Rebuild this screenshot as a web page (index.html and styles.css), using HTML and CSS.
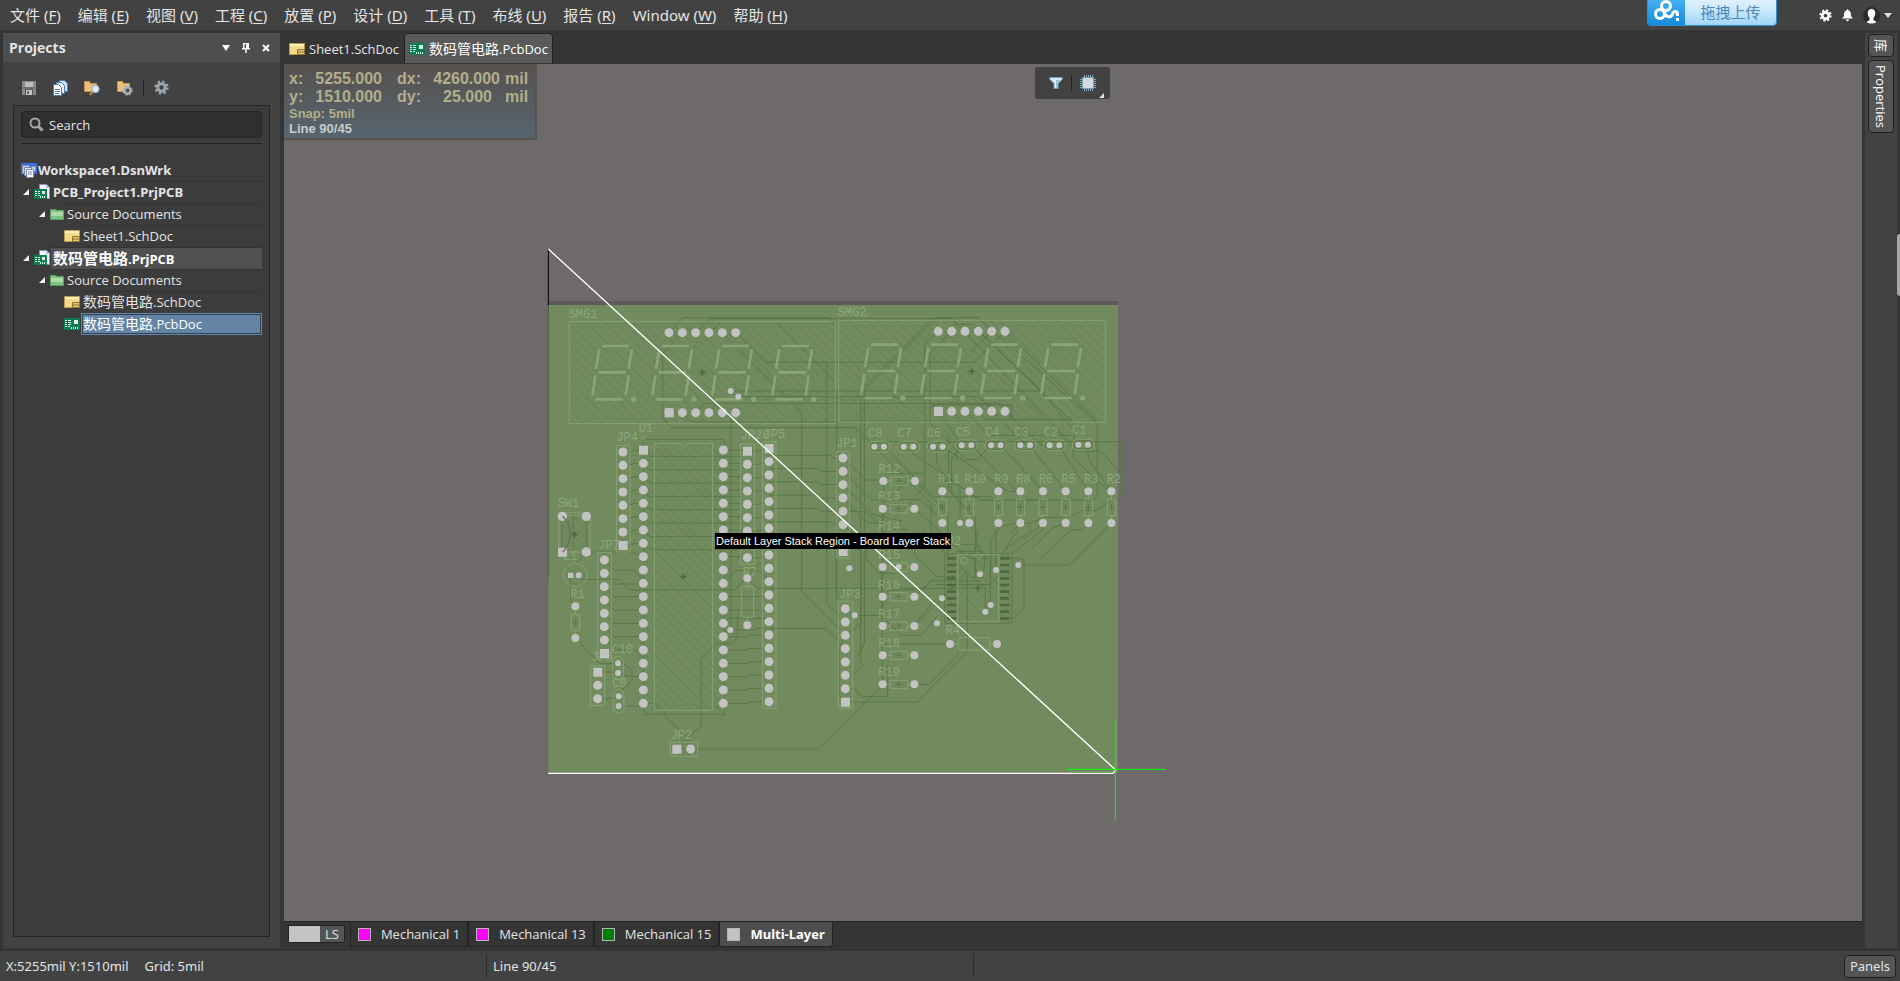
FILE: index.html
```html
<!DOCTYPE html>
<html lang="zh-CN">
  <head>
    <meta charset="UTF-8" />
    <meta name="viewport" content="width=device-width, initial-scale=1.0" />
    <title>数码管电路.PcbDoc</title>
    <link rel="stylesheet" href="styles.css">
  </head>
  <body>
    <!-- shared icons -->
    <svg class="defs" width="0" height="0">
      <symbol id="i-sch" viewBox="0 0 16 14">
        <path fill="#f3d98a" stroke="#b89a4c" d="M.5 1.500h15v11h-15z" />
        <path fill="#fbeebc" d="M1 2h14v2H1z" />
        <path fill="#e7c66c" stroke="#8a7236" d="M8.500 7.500h7v5h-7zM9 10h6" />
      </symbol>
      <symbol id="i-pcb" viewBox="0 0 16 14">
        <path fill="#0b7d52" d="M0 1h16v12H0z" />
        <path stroke="#d8f2e4" d="M1 3.500h2M4 3.500h3M1 5.500h2M4 5.500h3M1 7.500h2M4 7.500h3M1 9.500h2M4 9.500h2M7.500 10v2M9.500 10v2M11.500 10v2M13.500 10v2" />
        <path fill="#e6efea" d="M10 3h4v4h-4z" />
      </symbol>
      <symbol id="i-prj" viewBox="0 0 16 16">
        <path fill="#f2f3fb" stroke="#8b90b5" d="M5.500.5h7l3 3v11h-10z" />
        <path fill="#b9bfe0" d="M12 0v4h4z" />
        <path fill="#0b7d52" d="M0 5h13v10H0z" />
        <path stroke="#d8f2e4" d="M1 7.500h2M4 7.500h2M1 9.500h2M4 9.500h2M1 11.500h2M4 11.500h2M6.500 12v2M8.500 12v2M10.500 12v2" />
        <path fill="#e6efea" d="M8 7h3v3H8z" />
      </symbol>
      <symbol id="i-wrk" viewBox="0 0 16 16">
        <path fill="#3d6fd6" d="M0 1h16v11H0z" />
        <path fill="#c9d6ee" stroke="#7688ac" d="M1.500 3.500h7v8h-7zM10.500 4.500h4v5h-4z" />
        <path fill="#e4eaf5" stroke="#7688ac" d="M3.500 5.500h7v8h-7z" />
        <path fill="#f7f9fd" stroke="#7688ac" d="M5.500 7.500h7v8h-7zM7 10h4M7 12h4" />
      </symbol>
      <symbol id="i-dir" viewBox="0 0 14 12">
        <path fill="#7fc482" stroke="#5f9e62" d="M.5 1.500h5l1.500 1h6.500v9H.5z" />
        <path fill="#a9dba6" d="M1 4h12v4H1z" />
      </symbol>
      <symbol id="i-gear" viewBox="0 0 16 16">
        <circle cx="8" cy="8" r="6.300" fill="none" stroke="currentColor" stroke-width="2.600" stroke-dasharray="2.500 2.450" />
        <circle cx="8" cy="8" r="4" fill="none" stroke="currentColor" stroke-width="3.400" />
      </symbol>
      <symbol id="i-arrow" viewBox="0 0 6 6">
        <path fill="#f2f2f2" d="M6 0v6H0z" />
      </symbol>
    </svg>

    <header class="menubar">
      <nav class="menu">
        <button type="button">文件 (<u>F</u>)</button>
        <button type="button">编辑 (<u>E</u>)</button>
        <button type="button">视图 (<u>V</u>)</button>
        <button type="button">工程 (<u>C</u>)</button>
        <button type="button">放置 (<u>P</u>)</button>
        <button type="button">设计 (<u>D</u>)</button>
        <button type="button">工具 (<u>T</u>)</button>
        <button type="button">布线 (<u>U</u>)</button>
        <button type="button">报告 (<u>R</u>)</button>
        <button type="button">Window (<u>W</u>)</button>
        <button type="button">帮助 (<u>H</u>)</button>
      </nav>
      <button type="button" class="upload">
        <span class="upload-logo">
          <svg width="28" height="24" viewBox="0 0 28 24" fill="none" stroke="#fff" stroke-width="3">
            <circle cx="7" cy="14" r="4.500" />
            <circle cx="13" cy="6" r="4.500" />
            <path d="M10.500 11c2 6 7 8 9 3 1-3 5-4 5 1v1" />
            <path d="M24.500 18v3" />
          </svg>
        </span>
        <span class="upload-text">拖拽上传</span>
      </button>
      <div class="account">
        <button type="button" aria-label="Settings"><svg width="13" height="13"><use href="#i-gear" /></svg></button>
        <button type="button" aria-label="Notifications">
          <svg width="11" height="13" viewBox="0 0 11 13"><path fill="#fff" d="M5.500 0l1 1.500C9 2.200 9 5 9 7l2 2.500H0L2 7c0-2 0-4.800 2.500-5.500zM3.500 10.500h4l-2 2z" /></svg>
        </button>
        <button type="button" class="user" aria-label="User">
          <svg width="17" height="17" viewBox="0 0 17 17"><circle cx="8.500" cy="8.500" r="8.500" fill="#2c2c2c" /><path fill="#fff" d="M8.500 2c2.600 0 3.800 1.800 3.800 4.300S11 10 10.500 11v2l3 2c-2.500 2-7.500 2-10 0l3-2v-2C6 10 4.700 8.800 4.700 6.300S5.900 2 8.500 2z" /></svg>
          <svg width="8" height="5" viewBox="0 0 8 5"><path fill="#ddd" d="M0 0h8L4 5z" /></svg>
        </button>
      </div>
    </header>

    <main class="workspace">
      <aside class="panel">
        <div class="panel-head">
          <h2>Projects</h2>
          <button type="button" aria-label="Menu"><svg width="8" height="6" viewBox="0 0 8 6"><path fill="#fff" d="M0 0h8L4 6z" /></svg></button>
          <button type="button" aria-label="Pin"><svg width="8" height="10" viewBox="0 0 8 10"><path fill="#fff" d="M1 0h6v5h1v1.500H4.700V10H3.300V6.500H0V5h1zM2.500 1v4h1.500V1z" /></svg></button>
          <button type="button" aria-label="Close"><svg width="8" height="8" viewBox="0 0 8 8"><path stroke="#fff" stroke-width="2" d="M1 1l6 6M7 1L1 7" /></svg></button>
        </div>

        <div class="panel-tools">
          <div class="tool-group">
            <button type="button" aria-label="Save">
              <svg width="16" height="16" viewBox="0 0 16 16"><path fill="#8b8b8b" d="M1 1h14v14H1z" /><path fill="#bdbdbd" d="M4 2h8v5H4z" /><path fill="#555" d="M4 9h8v6H4zM2 7.500h12v1H2z" /><path fill="#c8c8c8" d="M5 10h6v5H5z" /><path fill="#666" d="M6 11h2v3H6z" /></svg>
            </button>
            <button type="button" aria-label="Copy">
              <svg width="16" height="16" viewBox="0 0 16 16" stroke="#4f7db5"><path fill="#cfe0f4" d="M7.500.5h5l3 3v8h-8z" /><path fill="#e2edf9" d="M4.500 2.500h5l3 3v8h-8z" /><path fill="#fff" d="M1.500 4.500h5l3 3v8h-8zM3 9.500h5M3 11.500h5M3 13.500h4" /></svg>
            </button>
            <button type="button" aria-label="Find in project">
              <svg width="18" height="16" viewBox="0 0 18 16"><path fill="#e8bf7c" stroke="#c4954f" d="M1.500 1.500h5l1 2h6v8h-12z" /><path stroke="#c98d39" stroke-width="2" d="M10 11l-3 4" /><circle cx="12.500" cy="9" r="3.700" fill="#dcebf5" stroke="#90abc0" /></svg>
            </button>
            <button type="button" aria-label="Project options">
              <svg width="17" height="16" viewBox="0 0 17 16"><path fill="#e8bf7c" stroke="#c4954f" d="M1.500 1.500h5l1 2h6v8h-12z" /><circle cx="11.500" cy="10.500" r="3.200" fill="#555" stroke="#a9b4bc" stroke-width="2.400" /><circle cx="11.500" cy="10.500" r="4.800" fill="none" stroke="#a9b4bc" stroke-dasharray="2 1.770" /></svg>
            </button>
          </div>
          <span class="sep"></span>
          <button type="button" aria-label="Panel settings" class="steel"><svg width="15" height="15"><use href="#i-gear" /></svg></button>
        </div>

        <div class="panel-body">
          <label class="search">
            <svg width="15" height="15" viewBox="0 0 15 15" fill="none" stroke="#a8a8a8"><circle cx="6" cy="6" r="4.500" stroke-width="2" /><path stroke-width="3" d="M9.500 9.500l4 4" /></svg>
            <input type="text" placeholder="Search" aria-label="Search">
          </label>
          <ul class="tree">
            <li class="lv0"><svg width="16" height="16"><use href="#i-wrk" /></svg><a href="#" class="bold">Workspace1.DsnWrk</a></li>
            <li class="lv1"><svg width="6" height="6"><use href="#i-arrow" /></svg><svg width="16" height="16"><use href="#i-prj" /></svg><a href="#" class="bold">PCB_Project1.PrjPCB</a></li>
            <li class="lv2"><svg width="6" height="6"><use href="#i-arrow" /></svg><svg width="14" height="12"><use href="#i-dir" /></svg><a href="#">Source Documents</a></li>
            <li class="lv3"><svg width="16" height="14"><use href="#i-sch" /></svg><a href="#">Sheet1.SchDoc</a></li>
            <li class="lv1"><svg width="6" height="6"><use href="#i-arrow" /></svg><svg width="16" height="16"><use href="#i-prj" /></svg><a href="#" class="bold current"><span class="zh">数码管电路</span>.PrjPCB</a></li>
            <li class="lv2"><svg width="6" height="6"><use href="#i-arrow" /></svg><svg width="14" height="12"><use href="#i-dir" /></svg><a href="#">Source Documents</a></li>
            <li class="lv3"><svg width="16" height="14"><use href="#i-sch" /></svg><a href="#"><span class="zh">数码管电路</span>.SchDoc</a></li>
            <li class="lv3"><svg width="16" height="14"><use href="#i-pcb" /></svg><a href="#" class="selected"><span class="zh">数码管电路</span>.PcbDoc</a></li>
          </ul>
        </div>
      </aside>

      <section class="editor">
        <div class="doc-tabs">
          <button type="button"><svg width="16" height="14"><use href="#i-sch" /></svg>Sheet1.SchDoc</button>
          <button type="button" class="active"><svg width="16" height="14"><use href="#i-pcb" /></svg><span><span class="zh">数码管电路</span>.PcbDoc</span></button>
        </div>

        <div class="canvas">
          <svg class="board" width="640" height="590" viewBox="-12 -150 1920 1770">
            <defs>
              <pattern id="hatch" width="20" height="20" patternUnits="userSpaceOnUse" patternTransform="rotate(45)">
                <path d="M0 10h20" stroke="#67825a" stroke-width="3" />
              </pattern>
              <g id="digit" class="segment">
                <path d="M30 6h81M22 16l-10 58M120 16l-10 58M19 85h83M10 94L1 154M110 94l-9 60M10 166h82" />
                <circle cx="125" cy="166" r="8" />
              </g>
              <g id="six" class="pads"><path d="M0 0h201" /></g>
              <g id="cap">
                <rect class="silk" x="-18" y="-16" width="65" height="32" rx="16" />
                <rect class="trace" x="-13" y="-12" width="55" height="24" rx="12" />
                <circle class="pad" r="9" /><circle class="pad" cx="29" r="9" />
              </g>
              <g id="resv">
                <path class="trace" d="M0 38v20M-9 48H9" />
                <path class="silk" d="M-12 24h25v49h-25zM0 14v10M0 73v10" />
                <circle class="pad" r="12" /><circle class="pad" cy="95" r="12" />
              </g>
              <g id="resh">
                <path class="trace" d="M48-10v20M38 0h20" />
                <path class="silk" d="M23-12h51v25H23zM14 0h9M74 0h9" />
                <circle class="pad" r="12" /><circle class="pad" cx="95" r="12" />
              </g>
            </defs>

            <path fill="#5c5a5a" d="M26 33h1708v14H26z" />
            <path fill="#728b5e" d="M26 45h1708v1403H26z" />

            <!-- component bodies -->
            <g fill="url(#hatch)">
              <path d="M88 94h798v307H88zM307 448h247v825H307zM57 669h93v117H57zM391 1357h82v42h-82zM1214 791h202v209h-202zM896 91h800v306H896z" />
              <circle cx="106" cy="855" r="35" />
            </g>

            <!-- copper -->
            <g class="trace">
              <path d="M387 128L430 83H865l20 20M467 128l43-42h725l40 38M427 128l-59 62v198l26 25h552l57 57M507 128l34-30M587 128l90 89h626l92-93M547 128l238 237v540l115 115" />
              <path d="M572 303h931M595 320h720l60 58M495 340h885l40 40M467 368l28-28M427 368l28 28h1140M507 368l28-34M572 375v645M860 220v720l40 40M890 300v630" />
              <path d="M712 98l170 172M1195 124l-41 41v425l-30 34-60 60M1235 124l-65 66v210l60 60M962 330v790M973 300v760l-20 40M973 300l217-217h125l357 317v220l-10 10h-345" />
              <path d="M1180 83L960 303M1275 124l100 110 220 230M1315 124l300 290M1395 124l275 270M1355 124l-60 60M1235 103h60l220 210M1503 303l100 120v60h80l62 70" />
              <path d="M1195 364l-20-20h240v36l-20 16M1195 370l55 70v70M1235 364l22 22M1275 364l70 72h250M1315 364l22 24h258M1355 364l110 105M1395 364l120 110" />
              <path d="M1003 470l170 170v90M1032 470l150 150h170M1091 470l230 160h340M1208 470l195 134h38M1265 466l-30 40v100l40 52M1294 466l138 138M1353 466l-44 43h-32l-42-43M1382 466l128 138M1470 466l107 138M1557 466l88 138M1600 484v20l108 100M1644 464v40l68 100" />
              <path d="M1021 455h80M1121 455h620v165l-10 8M1190 470v50l40 60M1226 440v160l80 84v180M1154 550h-120" />
              <path d="M909 504l70 66h50M909 544l85 85h150l50 50M909 584l90 90 90 20M909 624l75 75h46M909 664h66l60 55h70M909 704l70 60v50" />
              <path d="M1031 573l-2 170M1124 573l100 95v130l70 65h40M1124 656l160 148h60M1028 656v300M1100 573l-90 90" />
              <path d="M249 486h20l14-6h27M249 526h20l14-6h27M249 566h20l14-6h27M249 606h20l14-6h27M249 646h20l14-6h27M249 686h20l14-6h27M249 726h20l14-6h27M249 766h20l14-6h27" />
              <path d="M310 480l20 19h272M310 520l20 20h272M310 560l20 19h272M310 600l20 19h272M310 640l20 19h272M310 680l20 19h272M310 720l20 19h272M310 760l20 19h272" />
              <path d="M550 480h48l24 3h38l10-5h17M550 520h48l24 3h38l10-5h17M550 560h48l24 3h38l10-5h17M550 600h48l24 3h38l10-5h17M550 640h48l24 3h38l10-5h17M550 680h48l24 3h38l10-5h17M550 720h48l24 3h38l10-5h17M550 760h48l24 3h38l10-5h17M550 800h48l24 3h38l10-5h17" />
              <path d="M687 496h185l10 9h27M687 535h150l8 9h64M687 575h145l8 9h69M687 615h140l8 9h74M687 655h145l8 9h69M687 695h190l8 9h24" />
              <path d="M193 810l30 30h57l30 30M193 850l30 32h87M193 890l28 30h89M193 930l28 30h89M193 970l28 30h89M193 1010l28 30h89M193 1050l34 29h56l27 27M139 786h140l31 14" />
              <path d="M550 1080h70l8-5h59M550 1120h70l8-5h59M550 1160h70l8-5h59M550 1200h70l8-5h59M550 1240h70l8-5h59M550 1040h70l8-5h59M550 1000l15-15h122M550 960h137M550 920h137M550 880l38-38h70l29 30" />
              <path d="M139 786l-30 34M116 856l10 12h110l30 32h320l75-80M92 856v80l14 14M106 1044l74 77h54M173 1146h60M233 1148l35 12h42M173 1226h30l33-6M236 1210l40-40v-30l-42-30M236 1248h74" />
              <path d="M310 1240h30l112 115v22M411 1377l72-70v-200l45-46h45l20-20v-70M572 1020h75l8-5h203l37 37M622 865l30 30h650M452 1377h383l193-193" />
              <path d="M1028 1184l-4-364M1028 831h70M1028 920l20-20h100l30-30M917 1237l-20-20V1070l20-30M917 1156h20l36-36M922 1196h20l26 24h75v-95M916 1236h216l150-150V850" />
              <path d="M888 760v150M963 760v240l-46 38M940 760l76 90h50M944 976h80l60 60h60l46-56M1123 1183h44l88-90v-20M1230 1062h-200M1124 1008l100-100 60-70M1190 925l-70 80M1124 920l48-47h150" />
              <path d="M1124 740v56l66 64h55M1150 720l80 84h18M1250 784h80M1190 884h160l30-30M1263 763h50l20 34v38l-14 18M1319 853l-16-20v-25M1307 720v50l-20 30" />
              <path d="M1352 840v-90l20-30M1368 720v120M1384 800l10-20 40-60M1351 945v-130l-40-40V720M1336 965v-70l-22-20M1435 825h153l105-105M1400 985h20l32-32V810l-10-5h-42M1394 780l80-60M1417 790l90-70v-10" />
              <path d="M1300 720l-40-42v-90l-60-20M1376 720v-10l52-10h40l46-18h66l46-20h40l60-38M1441 699l-30 30M1509 699l-60 50M1577 699l-40 16-60 60M1645 699l-15 20h-35l-98 90M1714 699l-21 21" />
            </g>
            <g class="hidden-copper">
              <path d="M310 448h244v825H310zM1214 791h202v209h-202zM100 669v117M66 669v117M140 669v117" />
              <path class="pins" d="M1235 801v190M1394 801v190" />
              <path class="mark" d="M478 247h19M487 238v19M1286 244h19M1295 235v19M421 860h19M430 851v19M1305 894h19M1314 885v19M95 733h18M104 724v18" />
            </g>

            <!-- overlay -->
            <g class="silk">
              <path d="M88 94h798v307H88zM896 91h800v306H896zM229 466h41v320h-41zM343 460h78c2 14 20 14 22 0h75v801H343zM602 462h42v360h-42zM668 455h40v800h-40zM57 669h93v117H57zM173 788h41v317h-41zM152 1127h42v119h-42zM391 1357h82v42h-82zM890 484h38v320h-38zM895 934h43v321h-43zM1253 794h123v201h-123z" />
              <path d="M604 890h37v92h-37zM622 875v15M622 982v15M1255 1043h94v37h-94zM1242 1062h13M1349 1062h13M1305 794c2 14 20 14 22 0M80 676h46" />
              <path d="M218 1119v-5c0-20 32-20 32 0v40c0 20-32 20-32 0zM220 1219v-5c0-20 32-20 32 0v40c0 20-32 20-32 0z" />
              <circle cx="106" cy="855" r="35" />
              <circle cx="310" cy="443" r="5" />
              <circle cx="1271" cy="811" r="10" />
            </g>
            <use href="#digit" x="156" y="162" /><use href="#digit" x="336" y="162" /><use href="#digit" x="516" y="162" /><use href="#digit" x="696" y="162" />
            <use href="#digit" x="963" y="158" /><use href="#digit" x="1143" y="158" /><use href="#digit" x="1323" y="158" /><use href="#digit" x="1503" y="158" />

            <g class="ref">
              <text x="86" y="83">SMG1</text><text x="893" y="79">SMG2</text>
              <text x="296" y="425">U1</text><text x="229" y="453">JP4</text><text x="602" y="447">JP26</text><text x="671" y="444">JP5</text>
              <text x="53" y="651">SW1</text><text x="174" y="776">JP7</text><text x="69" y="809">L1</text><text x="91" y="924">R1</text>
              <text x="215" y="1089">C10</text><text x="217" y="1190">C9</text><text x="154" y="1112">JP6</text><text x="392" y="1347">JP2</text><text x="608" y="857">R7</text>
              <text x="888" y="472">JP1</text><text x="897" y="924">JP3</text><text x="1217" y="1031">R4</text><text x="1220" y="765">U2</text>
              <text x="984" y="441">C8</text><text x="1072" y="441">C7</text><text x="1160" y="441">C6</text><text x="1247" y="437">C5</text><text x="1335" y="437">C4</text><text x="1423" y="437">C3</text><text x="1511" y="437">C2</text><text x="1596" y="433">C1</text>
              <text x="1015" y="550">R12</text><text x="1015" y="631">R13</text><text x="1015" y="719">R14</text><text x="1015" y="806">R15</text><text x="1015" y="896">R16</text><text x="1015" y="983">R17</text><text x="1015" y="1071">R18</text><text x="1015" y="1159">R19</text>
              <text x="1194" y="579">R11</text><text x="1273" y="579">R10</text><text x="1363" y="579">R9</text><text x="1428" y="579">R8</text><text x="1496" y="579">R6</text><text x="1564" y="579">R5</text><text x="1632" y="579">R3</text><text x="1700" y="579">R2</text>
            </g>

            <!-- parts with their own outline -->
            <use href="#cap" x="1003" y="470" /><use href="#cap" x="1091" y="470" /><use href="#cap" x="1179" y="470" /><use href="#cap" x="1265" y="466" />
            <use href="#cap" x="1353" y="466" /><use href="#cap" x="1441" y="466" /><use href="#cap" x="1529" y="466" /><use href="#cap" x="1615" y="464" />
            <use href="#resv" x="1207" y="604" /><use href="#resv" x="1288" y="604" /><use href="#resv" x="1375" y="604" /><use href="#resv" x="1441" y="604" />
            <use href="#resv" x="1509" y="604" /><use href="#resv" x="1577" y="604" /><use href="#resv" x="1645" y="604" /><use href="#resv" x="1714" y="604" />
            <use href="#resv" x="106" y="949" />
            <use href="#resh" x="1030" y="573" /><use href="#resh" x="1028" y="656" /><use href="#resh" x="1028" y="743" /><use href="#resh" x="1028" y="831" />
            <use href="#resh" x="1028" y="920" /><use href="#resh" x="1028" y="1008" /><use href="#resh" x="1028" y="1096" /><use href="#resh" x="1028" y="1183" />

            <!-- pad rows -->
            <use href="#six" x="387" y="128" /><use href="#six" x="387" y="368" /><use href="#six" x="1195" y="124" /><use href="#six" x="1195" y="364" />
            <g class="pads">
              <path d="M249 486v241M310 520v721M550 480v761M622 523v281M687 515v721M193 810v241M173 1186v41M909 504v241M916 956v241M452 1377h1" />
            </g>
            <g class="pad">
              <path d="M374 355h27v27h-27zM1182 351h27v27h-27zM297 467h27v27h-27zM609 470h27v27h-27zM674 462h27v27h-27zM236 753h27v27h-27zM54 773h27v27H54zM180 1077h27v27h-27zM160 1133h27v27h-27zM397 1364h27v27h-27zM896 771h27v27h-27zM903 1223h27v27h-27zM84 848h16v16H84z" />
              <circle cx="67" cy="679" r="14" /><circle cx="139" cy="679" r="14" /><circle cx="139" cy="786" r="14" />
              <circle cx="116" cy="856" r="9" /><circle cx="622" cy="865" r="12" /><circle cx="622" cy="1006" r="12" />
              <circle cx="234" cy="1120" r="9" /><circle cx="234" cy="1149" r="9" /><circle cx="236" cy="1219" r="9" /><circle cx="236" cy="1248" r="9" />
              <circle cx="1230" cy="1062" r="12" /><circle cx="1371" cy="1062" r="12" />
              <!-- vias -->
              <circle cx="572" cy="303" r="9" /><circle cx="595" cy="320" r="9" /><circle cx="571" cy="1020" r="9" />
              <circle cx="928" cy="835" r="9" /><circle cx="944" cy="976" r="9" /><circle cx="1076" cy="831" r="9" /><circle cx="1260" cy="699" r="9" />
              <circle cx="1206" cy="925" r="9" /><circle cx="1191" cy="1000" r="9" /><circle cx="1320" cy="853" r="9" /><circle cx="1368" cy="840" r="9" />
              <circle cx="1435" cy="825" r="9" /><circle cx="1352" cy="945" r="9" /><circle cx="1336" cy="965" r="9" />
            </g>
            <path class="arc" d="M68 679c30 30 30 78 0 107" />

            <!-- board outline and cursor -->
            <path stroke="#000" stroke-width="3" d="M25-123V45" />
            <path stroke="#4f5a45" stroke-width="3" d="M25 45v815" />
            <path fill="none" stroke="#fff" stroke-width="4" d="M24 1450h1695l8-10L25-123" />
            <path stroke="#0f0" stroke-width="3" d="M1578 1438h300M1726 1290v300" />
          </svg>

          <div class="hud">
            <table>
              <tr><td>x:</td><td class="num">5255.000</td><td class="delta">dx:</td><td class="num">4260.000</td><td class="unit">mil</td></tr>
              <tr><td>y:</td><td class="num">1510.000</td><td class="delta">dy:</td><td class="num short">25.000</td><td class="unit">mil</td></tr>
            </table>
            <p>Snap: 5mil</p>
            <p class="mode">Line 90/45</p>
          </div>

          <div class="float-tools">
            <button type="button" aria-label="Filter">
              <svg width="14" height="12" viewBox="0 0 14 12"><path fill="#d5edf5" stroke="#6fa3b8" d="M.8.5h12.400v1.800L9 6.500v5H5v-5L.8 2.300z" /><path fill="#8fc0d2" d="M7 3h4L8 6v5H7z" /></svg>
            </button>
            <span class="sep"></span>
            <button type="button" aria-label="Objects">
              <svg width="16" height="16" viewBox="0 0 16 16"><path stroke="#86a9be" d="M4.500 0v16M6.500 0v16M8.500 0v16M10.500 0v16M12.500 0v16M0 4.500h16M0 6.500h16M0 8.500h16M0 10.500h16M0 12.500h16" /><path fill="#d4d9dd" stroke="#7c9caf" d="M2.500 2.500h11v11h-11z" /></svg>
            </button>
            <svg class="corner" width="5" height="5" viewBox="0 0 5 5"><path fill="#ddd" d="M5 0v5H0z" /></svg>
          </div>

          <div class="hint">Default Layer Stack Region - Board Layer Stack</div>
        </div>

        <div class="layer-tabs">
          <button type="button" class="ls"><i class="swatch-ls"></i>LS</button>
          <button type="button"><i class="swatch magenta"></i>Mechanical 1</button>
          <button type="button"><i class="swatch magenta"></i>Mechanical 13</button>
          <button type="button"><i class="swatch green"></i>Mechanical 15</button>
          <button type="button" class="active"><i class="swatch grey"></i>Multi-Layer</button>
        </div>
      </section>

      <aside class="rail">
        <button type="button">库</button>
        <button type="button">Properties</button>
      </aside>
      <span class="edge-handle"></span>
    </main>

    <footer class="status">
      <div class="cell"><span>X:5255mil Y:1510mil</span><span>Grid: 5mil</span></div>
      <div class="cell">Line 90/45</div>
      <div class="cell last"><button type="button">Panels</button></div>
    </footer>
  </body>
</html>
```
FILE: styles.css
```css
* {
  box-sizing: border-box;
}

body {
  margin: 0;
  height: 100vh;
  display: flex;
  flex-direction: column;
  overflow: hidden;
  background-color: #353535;
  color: #e4e4e4;
  font-family: "Open Sans", "Noto Sans CJK SC", sans-serif;
  font-size: 13px;
  line-height: 20px;
}

button {
  font: inherit;
  color: inherit;
  background: none;
  border: none;
  padding: 0;
  margin: 0;
  white-space: nowrap;
}

svg {
  display: block;
  flex: none;
}

.defs {
  position: absolute;
}

.zh {
  font-size: 14px;
}

/* menu bar */
.menubar {
  display: flex;
  align-items: center;
  height: 30px;
  flex: none;
  background-color: #424242;
}

.menu {
  display: flex;
  gap: 17px;
  padding-left: 10px;
  font-family: "Noto Sans", "Noto Sans CJK SC", sans-serif;
  font-size: 15px;
  flex: 1;
}

.menu u {
  text-underline-offset: 2px;
}

.upload {
  display: flex;
  align-self: flex-start;
  width: 130px;
  height: 26px;
  border: 1px solid #2d8fd6;
  border-top: none;
  border-radius: 0 0 4px 4px;
  overflow: hidden;
}

.upload-logo {
  width: 37px;
  height: 25px;
  padding-left: 5px;
  background: linear-gradient(#43b0f0, #168bdc);
}

.upload-text {
  flex: 1;
  height: 25px;
  line-height: 25px;
  font-size: 15px;
  color: #4f87b5;
  background: linear-gradient(#dff1fd, #c4e6fb 50%, #9fd4f7);
}

.account {
  display: flex;
  align-items: center;
  gap: 10px;
  padding: 0 8px 0 42px;
  color: #fff;
}

.user {
  display: flex;
  align-items: center;
  gap: 4px;
}

/* main area */
.workspace {
  position: relative;
  display: flex;
  flex: 1;
  min-height: 0;
  padding: 3px;
}

.panel {
  display: flex;
  flex-direction: column;
  width: 277px;
  flex: none;
  background-color: #424242;
}

.panel-head {
  display: flex;
  align-items: center;
  gap: 12px;
  height: 29px;
  padding: 0 10px 0 6px;
  background-color: #4e4e4e;
}

.panel-head h2 {
  flex: 1;
  margin: 0;
  font-size: 14px;
  font-weight: bold;
}

.panel-tools {
  display: flex;
  align-items: center;
  height: 43px;
  padding: 8px 18px 0;
}

.tool-group {
  display: flex;
  gap: 15px;
}

.sep {
  width: 1px;
  height: 16px;
  background-color: #222;
}

.panel-tools .sep {
  margin: 0 10px;
}

.steel {
  color: #98a3ab;
}

.panel-body {
  flex: 1;
  margin: 0 10px 11px;
  padding: 5px 7px;
  border: 1px solid #242424;
  background-color: #3c3c3c;
}

.search {
  display: flex;
  align-items: center;
  gap: 5px;
  height: 27px;
  padding-left: 7px;
  border: 1px solid #252525;
  border-radius: 4px;
  background-color: #2f2f2f;
}

.search input {
  flex: 1;
  min-width: 0;
  height: 18px;
  padding: 0;
  border: none;
  outline: none;
  background: none;
  color: #e4e4e4;
  font: inherit;
}

.search input::placeholder {
  color: #e4e4e4;
}

.tree {
  list-style: none;
  margin: 5px 0 0;
  padding: 15px 0 0;
  border-top: 1px solid #222;
}

.tree li {
  display: flex;
  align-items: center;
  height: 22px;
}

.tree a {
  flex: 1;
  height: 22px;
  margin-left: 1px;
  padding-left: 2px;
  border-top: 1px solid #333;
  color: #e4e4e4;
  text-decoration: none;
  white-space: nowrap;
}

.tree li svg + svg {
  margin-left: 5px;
}

.tree .lv0 a {
  padding-left: 0;
  border-top-color: transparent;
}

.tree .lv1 {
  padding-left: 2px;
}

.tree .lv2 {
  padding-left: 18px;
}

.tree .lv3 {
  padding-left: 43px;
}

.tree .bold {
  font-family: "Noto Sans", "Noto Sans CJK SC", sans-serif;
  font-weight: bold;
}

.tree .bold .zh {
  font-size: 15px;
}

.tree .current {
  background-color: #505050;
  color: #fff;
}

.tree .selected {
  padding-left: 1px;
  border: 1px solid #6787a8;
  outline: 1px solid #2f4358;
  outline-offset: -2px;
  background-color: #6484a5;
  color: #fff;
}

/* editor */
.editor {
  display: flex;
  flex-direction: column;
  flex: 1;
  min-width: 0;
  margin: 0 3px 0 4px;
}

.doc-tabs {
  display: flex;
  height: 31px;
  flex: none;
}

.doc-tabs button {
  display: flex;
  align-items: center;
  gap: 4px;
  height: 30px;
  padding: 0 4px;
  border: 1px solid transparent;
  border-bottom: none;
}

.doc-tabs .active {
  border-color: #222;
  border-radius: 4px 4px 0 0;
  background-color: #5a5a5a;
  color: #fff;
}

.canvas {
  position: relative;
  flex: 1;
  min-height: 0;
  overflow: hidden;
  background-color: #6e6a69;
}

.board {
  position: absolute;
  left: 252px;
  top: 176px;
}

.trace {
  fill: none;
  stroke: #5b7646;
  stroke-width: 3;
}

.hidden-copper {
  fill: none;
  stroke: #61794c;
  stroke-width: 3;
}

.pins {
  stroke: #4f693c;
  stroke-width: 27;
  stroke-dasharray: 8 12;
}

.mark {
  stroke: #4f693c;
  stroke-width: 5;
}

.silk {
  fill: none;
  stroke: #86a273;
  stroke-width: 3;
}

.segment {
  fill: #8aa577;
  stroke: #8aa577;
  stroke-width: 8;
}

.segment circle {
  stroke: none;
}

.ref {
  fill: #8ca77b;
  font-family: "Liberation Mono", monospace;
  font-size: 36px;
}

.pad {
  fill: #c3c3c3;
}

.pads {
  fill: none;
  stroke: #c3c3c3;
  stroke-width: 27;
  stroke-linecap: round;
  stroke-dasharray: 0 40;
}

.arc {
  fill: none;
  stroke: #6e6a69;
  stroke-width: 4;
}

.hud {
  position: absolute;
  left: 0;
  top: 0;
  width: 253px;
  height: 76px;
  padding: 6px 0 0 5px;
  border-right: 2px solid #575150;
  border-bottom: 2px solid #575150;
  background: linear-gradient(#57514f, #56656f);
  color: #b3ae8b;
  font-family: "Liberation Sans", Arial, sans-serif;
  font-size: 13px;
  font-weight: bold;
  line-height: 15px;
}

.hud table {
  border-collapse: collapse;
  font-size: 16px;
  line-height: 18px;
}

.hud td {
  padding: 0;
}

.hud td:first-child {
  width: 25px;
}

.hud .num {
  width: 68px;
  text-align: right;
}

.hud .short {
  padding-right: 8px;
}

.hud .delta {
  width: 50px;
  padding-left: 15px;
}

.hud .unit {
  padding-left: 5px;
}

.hud p {
  margin: 0;
}

.hud .mode {
  color: #c8cccf;
}

.float-tools {
  position: absolute;
  left: 751px;
  top: 3px;
  display: flex;
  align-items: center;
  gap: 8px;
  height: 32px;
  width: 75px;
  padding-left: 14px;
  border-radius: 3px;
  background-color: #424242;
}

.corner {
  position: absolute;
  right: 6px;
  bottom: 1px;
}

.hint {
  position: absolute;
  left: 431px;
  top: 469px;
  padding: 1px 1px 0;
  background-color: #000;
  color: #fff;
  font-family: "Liberation Sans", Arial, sans-serif;
  font-size: 11px;
  line-height: 15px;
  white-space: nowrap;
}

.layer-tabs {
  display: flex;
  align-items: flex-start;
  height: 27px;
  flex: none;
  padding-left: 4px;
  border-top: 1px solid #222;
}

.layer-tabs button {
  display: flex;
  align-items: center;
  height: 25px;
  padding: 0 7px;
  border: 1px solid #242424;
  border-top: none;
  border-radius: 0 0 3px 3px;
}

.layer-tabs .ls {
  height: 18px;
  margin: 3px 5px 0 0;
  padding: 0 5px 0 0;
  gap: 5px;
  border: 1px solid #222;
  background-color: #555;
}

.layer-tabs .active {
  background-color: #4e4e4e;
  color: #fff;
  font-family: "Noto Sans", sans-serif;
  font-weight: bold;
}

.swatch-ls {
  width: 31px;
  height: 16px;
  background-color: #c3c3c3;
}

.swatch {
  width: 13px;
  height: 13px;
  margin-right: 10px;
  border: 1px solid #b5b5b5;
}

.magenta {
  background-color: #f0f;
}

.green {
  background-color: #008000;
}

.grey {
  background-color: #c3c3c3;
}

.rail {
  display: flex;
  flex-direction: column;
  align-items: center;
  gap: 3px;
  width: 32px;
  flex: none;
  padding-top: 1px;
  background-color: #424242;
}

.rail button {
  width: 26px;
  padding: 4px 0;
  border: 1px solid #1f1f1f;
  border-radius: 4px;
  background-color: #555;
  color: #fff;
  writing-mode: vertical-rl;
  text-orientation: sideways;
  line-height: 24px;
}

.edge-handle {
  position: absolute;
  right: 0;
  top: 204px;
  width: 3px;
  height: 62px;
  border-radius: 3px 0 0 3px;
  background-color: #a8a8a8;
}

/* status bar */
.status {
  display: flex;
  align-items: center;
  height: 30px;
  flex: none;
  background-color: #424242;
  font-family: "Noto Sans", sans-serif;
}

.cell {
  display: flex;
  gap: 16px;
  width: 487px;
  height: 24px;
  align-items: center;
  padding-left: 6px;
  border-right: 1px solid #2c2c2c;
}

.last {
  flex: 1;
  justify-content: flex-end;
  padding-right: 4px;
  border-right: none;
}

.last button {
  height: 23px;
  padding: 0 5px;
  border: 1px solid #1f1f1f;
  border-radius: 4px;
  background-color: #555;
}
```
